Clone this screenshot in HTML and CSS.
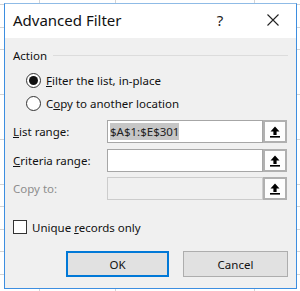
FILE: index.html
```html
<!DOCTYPE html>
<html>
<head>
<meta charset="utf-8">
<link rel="stylesheet" href="styles.css">
</head>
<body>
<div class="dialog">
  <div class="titlebar">
    <span class="title">Advanced Filter</span>
    <span class="help">?</span>
    <span class="close">
      <svg width="12" height="12" viewBox="0 0 12 12"><path d="M0.5 0.5 L11.5 11.5 M11.5 0.5 L0.5 11.5" stroke="#222" stroke-width="1.1" fill="none"/></svg>
    </span>
  </div>
  <div class="content">
    <div class="group-head">
      <span class="group-label">Action</span>
      <span class="group-line"></span>
    </div>
    <div class="radio-row r1">
      <span class="radio checked"><span class="dot"></span></span>
      <span class="rlabel"><u>F</u>ilter the list, in-place</span>
    </div>
    <div class="radio-row r2">
      <span class="radio"></span>
      <span class="rlabel">C<u>o</u>py to another location</span>
    </div>
    <div class="field f1">
      <span class="flabel"><u>L</u>ist range:</span>
      <span class="input"><span class="sel">$A$1:$E$301</span></span>
      <span class="pick"><svg width="10" height="12" viewBox="0 0 10 12"><path d="M5 0.5 L9.5 5.5 L6.6 5.5 L6.6 9 L3.4 9 L3.4 5.5 L0.5 5.5 Z" fill="#000"/><rect x="0" y="10" width="10" height="1.6" fill="#000"/></svg></span>
    </div>
    <div class="field f2">
      <span class="flabel"><u>C</u>riteria range:</span>
      <span class="input"></span>
      <span class="pick"><svg width="10" height="12" viewBox="0 0 10 12"><path d="M5 0.5 L9.5 5.5 L6.6 5.5 L6.6 9 L3.4 9 L3.4 5.5 L0.5 5.5 Z" fill="#000"/><rect x="0" y="10" width="10" height="1.6" fill="#000"/></svg></span>
    </div>
    <div class="field f3">
      <span class="flabel disabled">Copy to:</span>
      <span class="input off"></span>
      <span class="pick"><svg width="10" height="12" viewBox="0 0 10 12"><path d="M5 0.5 L9.5 5.5 L6.6 5.5 L6.6 9 L3.4 9 L3.4 5.5 L0.5 5.5 Z" fill="#000"/><rect x="0" y="10" width="10" height="1.6" fill="#000"/></svg></span>
    </div>
    <div class="check-row">
      <span class="checkbox"></span>
      <span class="clabel">Unique <u>r</u>ecords only</span>
    </div>
    <div class="buttons">
      <span class="btn ok">OK</span>
      <span class="btn">Cancel</span>
    </div>
  </div>
</div>
</body>
</html>
```

FILE: styles.css
```css
html, body {
  margin: 0;
  padding: 0;
}
body {
  width: 300px;
  height: 291px;
  overflow: hidden;
  background-color: #ffffff;
  background-image:
    linear-gradient(to right, transparent 39px, #d4d4d4 39px, #d4d4d4 40px, transparent 40px, transparent 115px, #d4d4d4 115px, #d4d4d4 116px, transparent 116px, transparent 254px, #d4d4d4 254px, #d4d4d4 255px, transparent 255px),
    repeating-linear-gradient(to bottom, transparent 0, transparent 4px, #d4d4d4 4px, #d4d4d4 5px, transparent 5px, transparent 22.5px);
  font-family: "Noto Sans", "Open Sans", sans-serif;
  color: #000;
  padding-top: 3px;
  padding-left: 4px;
  box-sizing: border-box;
}
.dialog {
  width: 293px;
  height: 286px;
  box-sizing: border-box;
  border: 1px solid #3d8ee0;
  border-top-color: #8fbbe6;
  background: #f0f0f0;
  display: flex;
  flex-direction: column;
}
.titlebar {
  height: 34px;
  background: #ffffff;
  display: flex;
  align-items: center;
  padding-left: 8px;
  flex-shrink: 0;
}
.title {
  font-size: 15px;
  color: #111;
  flex: 1;
  padding-bottom: 2px;
}
.help {
  font-size: 15px;
  width: 14px;
  text-align: center;
  margin-right: 40px;
  padding-bottom: 2px;
  color: #222;
}
.close {
  width: 12px;
  height: 12px;
  margin-right: 17px;
  display: flex;
  margin-bottom: 2px;
}
.content {
  padding: 0 8px 0 8px;
  font-size: 11.5px;
  display: flex;
  flex-direction: column;
}
.group-head {
  display: flex;
  align-items: center;
  height: 16px;
  margin-top: 9px;
}
.group-label {
  padding-right: 6px;
  color: #111;
}
.group-line {
  flex: 1;
  height: 1px;
  background: #dcdcdc;
}
.radio-row {
  display: flex;
  align-items: center;
  height: 16px;
  padding-left: 13px;
}
.r1 { margin-top: 9px; }
.r2 { margin-top: 7px; }
.radio {
  width: 15px;
  height: 15px;
  box-sizing: border-box;
  border: 1px solid #333;
  border-radius: 50%;
  background: #fff;
  display: flex;
  align-items: center;
  justify-content: center;
  margin-right: 5px;
}
.dot {
  width: 9px;
  height: 9px;
  border-radius: 50%;
  background: #111;
}
.rlabel {
  color: #111;
}
.field {
  display: flex;
  align-items: center;
  height: 23px;
}
.f1 { margin-top: 9px; }
.f2 { margin-top: 6px; }
.f3 { margin-top: 5px; }
.flabel {
  width: 94px;
  color: #111;
}
.flabel.disabled {
  color: #8d8d8d;
}
.input {
  width: 156px;
  height: 23px;
  box-sizing: border-box;
  border: 1px solid #a6a6a6;
  background: #fff;
  display: flex;
  align-items: center;
  padding-left: 2px;
}
.input.off {
  background: #f0f0f0;
  border-color: #cccccc;
}
.sel {
  background: #c6c6c6;
  color: #222;
  padding: 1px 0;
}
.pick {
  width: 24px;
  height: 23px;
  box-sizing: border-box;
  border: 2px solid #b0b0b0;
  background: #fdfdfd;
  display: flex;
  align-items: center;
  justify-content: center;
}
.check-row {
  display: flex;
  align-items: center;
  height: 14px;
  margin-top: 20px;
}
.checkbox {
  width: 14px;
  height: 14px;
  box-sizing: border-box;
  border: 1px solid #333;
  background: #fff;
  margin-right: 5px;
}
.clabel {
  color: #111;
}
.buttons {
  display: flex;
  justify-content: flex-end;
  gap: 14px;
  margin-top: 17px;
}
.btn {
  width: 105px;
  height: 26px;
  box-sizing: border-box;
  border: 1px solid #adadad;
  background: #e1e1e1;
  display: flex;
  align-items: center;
  justify-content: center;
  font-size: 11.5px;
  color: #111;
}
.btn.ok {
  width: 103px;
  border: 2px solid #0078d7;
}
```
